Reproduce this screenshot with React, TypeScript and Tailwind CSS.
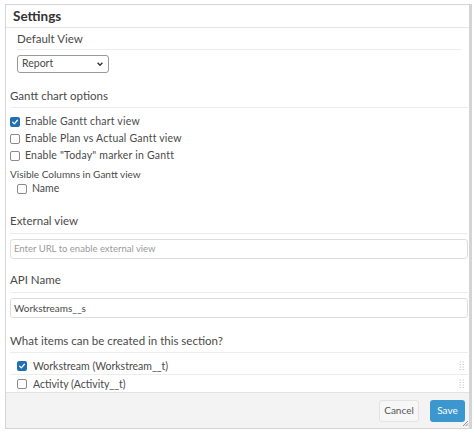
import React from "react"

function Box({ checked = false }: { checked?: boolean }) {
  return checked ? (
    <span className="flex h-[10px] w-[10px] shrink-0 items-center justify-center rounded-[2px] bg-[#1f6fb2]">
      <svg viewBox="0 0 10 10" className="h-[8px] w-[8px]">
        <path d="M2 5.2 L4.2 7.3 L8 2.8" fill="none" stroke="#fff" strokeWidth="1.6" strokeLinecap="round" strokeLinejoin="round" />
      </svg>
    </span>
  ) : (
    <span className="h-[10px] w-[10px] shrink-0 rounded-[2px] border border-[#8a8a8a] bg-white" />
  )
}

function Grip() {
  return (
    <svg viewBox="0 0 6 10" className="h-[10px] w-[6px]">
      {[1, 3.5, 6, 8.5].map((y) => (
        <g key={y}>
          <rect x="0.5" y={y - 0.5} width="1.5" height="1" fill="#cfcfcf" />
          <rect x="3.5" y={y - 0.5} width="1.5" height="1" fill="#cfcfcf" />
        </g>
      ))}
    </svg>
  )
}

export default function App() {
  const ganttOptions = [
    { label: "Enable Gantt chart view", checked: true },
    { label: "Enable Plan vs Actual Gantt view", checked: false },
    { label: 'Enable "Today" marker in Gantt', checked: false },
  ]

  return (
    <div className="h-[433px] w-[474px] bg-white pl-[5px] pt-[4px] text-[#4a4a4a] [font-family:Lato,'Open_Sans',sans-serif]">
      <div className="flex h-[425px] w-[467px] flex-col border border-r-[3px] border-[#d4d4d4] bg-white">
        {/* header */}
        <div className="flex h-[23px] shrink-0 items-center border-b border-[#e6e6e6] pl-[7px] text-[13.5px] font-bold text-[#333]">
          Settings
        </div>

        {/* body */}
        <div className="flex-1 overflow-hidden pl-[4px] pr-[1px]">
          <div className="ml-[7px] mr-[7px] flex h-[22px] items-center border-b border-[#ececec] text-[11.5px]">
            Default View
          </div>
          <div className="ml-[7px] mt-[5px] flex h-[18px] w-[92px] items-center justify-between rounded-[3px] border border-[#9a9a9a] px-[4px] text-[10.5px]">
            <span>Report</span>
            <svg viewBox="0 0 10 10" className="h-[8px] w-[8px]">
              <path d="M2 3.5 L5 6.5 L8 3.5" fill="none" stroke="#333" strokeWidth="1.8" />
            </svg>
          </div>

          <div className="mt-[11px] flex h-[24px] items-center border-b border-[#ececec] text-[11.5px]">
            Gantt chart options
          </div>
          <div className="mt-[5px] flex flex-col">
            {ganttOptions.map((o) => (
              <div key={o.label} className="flex h-[17px] items-center gap-[5px] text-[10.5px]">
                <Box checked={o.checked} />
                <span className="tracking-[0.2px]">{o.label}</span>
              </div>
            ))}
          </div>
          <div className="mt-[3px] flex h-[15px] items-center text-[10px]">Visible Columns in Gantt view</div>
          <div className="ml-[7px] flex h-[14px] items-center gap-[5px] text-[10.5px]">
            <Box />
            <span>Name</span>
          </div>

          <div className="mt-[12px] flex h-[26px] items-center border-b border-[#ececec] text-[11.5px]">
            External view
          </div>
          <div className="mt-[5px] flex h-[20px] items-center rounded-[3px] border border-[#dedede] px-[3px] text-[9.5px] text-[#9a9a9a]">
            Enter URL to enable external view
          </div>

          <div className="mt-[8px] flex h-[26px] items-center border-b border-[#ececec] text-[11.5px]">
            API Name
          </div>
          <div className="mt-[5px] flex h-[20px] items-center rounded-[3px] border border-[#dedede] px-[3px] text-[10px]">
            Workstreams__s
          </div>

          <div className="mt-[11px] flex h-[24px] items-center border-b border-[#ececec] text-[11.5px]">
            What items can be created in this section?
          </div>
          <div className="mt-[4px] flex flex-col">
            {[
              { label: "Workstream (Workstream__t)", checked: true },
              { label: "Activity (Activity__t)", checked: false },
            ].map((r) => (
              <div key={r.label} className="flex h-[18px] items-center justify-between border-b border-[#ececec] pl-[7px] pr-[3px] text-[10.5px]">
                <div className="flex items-center gap-[6px]">
                  <Box checked={r.checked} />
                  <span className="leading-[14px]">{r.label}</span>
                </div>
                <Grip />
              </div>
            ))}
          </div>
        </div>

        {/* footer */}
        <div className="relative flex h-[36px] shrink-0 items-center justify-end gap-[11px] border-t border-[#e2e2e2] bg-[#f3f3f3] pr-[4px]">
          <button className="h-[22px] w-[40px] rounded-[3px] border border-[#e3e3e3] bg-[#f7f7f7] text-[10px] text-[#555]">
            Cancel
          </button>
          <button className="h-[22px] w-[35px] rounded-[3px] bg-[#3c97cf] text-[10px] text-white">Save</button>
          <svg viewBox="0 0 8 8" className="absolute bottom-[1px] right-[0px] h-[8px] w-[8px]">
            <path d="M7 2 L2 7 M7 4.5 L4.5 7 M7 6.5 L6.5 7" stroke="#777" strokeWidth="0.8" />
          </svg>
        </div>
      </div>
    </div>
  )
}
